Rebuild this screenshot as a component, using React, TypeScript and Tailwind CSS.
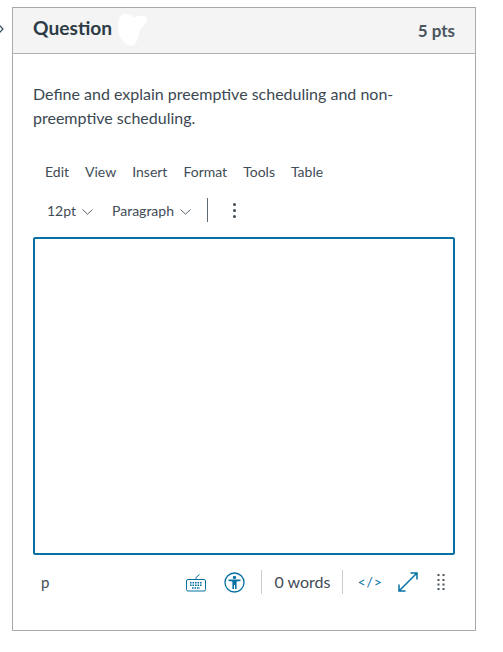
import React from 'react';

const menus = ['Edit', 'View', 'Insert', 'Format', 'Tools', 'Table'];

const Chevron = () => (
  <svg width="11" height="6" viewBox="0 0 11 6" fill="none" stroke="#5a6670" strokeWidth="1">
    <path d="M0.5 0.5 L5.5 5.2 L10.5 0.5" />
  </svg>
);

const App: React.FC = () => {
  return (
    <div className="relative w-[503px] h-[652px] overflow-hidden bg-white pt-[7px] pl-[12px] font-['Lato',sans-serif] text-[#2d3b45]">
      <svg className="absolute left-0 top-[24px]" width="4" height="10" viewBox="0 0 4 10" fill="none" stroke="#2d4a5c" strokeWidth="1.2">
        <path d="M-1 0.8 L3 5 L-1 9.2" />
      </svg>

      <div className="w-[464px] h-[624px] border border-[#a9a9a9] flex flex-col">
        <div className="relative h-[46px] shrink-0 bg-[#f4f4f4] border-b border-[#b0b0b0] flex items-center justify-between pl-[20px] pr-[20px]">
          <span className="text-[19.2px] font-bold leading-none -mt-[5px]">Question</span>
          <span className="text-[17px] font-bold text-[#4a555e] leading-none -mt-[1px]">5 pts</span>
          <svg className="absolute left-[105px] top-[6px]" width="30" height="33" viewBox="0 0 30 33" fill="#ffffff">
            <path d="M4 1 C8 -1 13 1 16 4 C20 1 29 0 29 6 C29 11 24 12 22 16 C21 20 20 26 17 30 C14 33 9 32 6 28 C3 25 0 20 0 13 C0 8 1 3 4 1 Z" />
          </svg>
        </div>

        <div className="flex-1 flex flex-col px-[20px]">
          <p className="mt-[28px] text-[16px] leading-[24px] text-[#3b4852]">
            Define and explain preemptive scheduling and non-
            <br />
            preemptive scheduling.
          </p>

          <div className="mt-[32px] ml-[12px] flex gap-[16px] text-[14px] leading-[20px] text-[#3f4c56]">
            {menus.map((m) => (
              <span key={m}>{m}</span>
            ))}
          </div>

          <div className="mt-[14px] ml-[14px] h-[28px] flex items-center text-[14px] text-[#3f4c56]">
            <span>12pt</span>
            <span className="ml-[6px] mt-[3px]"><Chevron /></span>
            <span className="ml-[19px]">Paragraph</span>
            <span className="ml-[6px] mt-[3px]"><Chevron /></span>
            <div className="ml-[16px] w-px h-[24px] bg-[#5f6a73]" />
            <div className="ml-[25px] flex flex-col gap-[3px]">
              <div className="w-[3px] h-[3px] rounded-full bg-[#3f4c56]" />
              <div className="w-[3px] h-[3px] rounded-full bg-[#3f4c56]" />
              <div className="w-[3px] h-[3px] rounded-full bg-[#3f4c56]" />
            </div>
          </div>

          <div className="mt-[13px] h-[318px] border-2 border-[#0770a3] rounded-[2px]" />

          <div className="mt-[14px] h-[26px] flex items-center text-[#3f4c56]">
            <span className="ml-[8px] text-[15px] leading-none">p</span>
            <div className="ml-auto flex items-center">
              <svg width="20" height="19" viewBox="0 0 20 19" fill="none" stroke="#0770a3" strokeWidth="1">
                <rect x="0.5" y="6.5" width="19" height="11.5" rx="1.5" />
                <path d="M10 6 V4.5 L13.5 1.5" />
                <path d="M4 9.8 H16 M4 12.2 H16 M6 15 H14" strokeWidth="1.4" strokeDasharray="1.6 0.9" />
              </svg>
              <svg className="ml-[18px]" width="21" height="21" viewBox="0 0 21 21" fill="none">
                <circle cx="10.5" cy="10.5" r="9.5" stroke="#0770a3" strokeWidth="1.3" />
                <circle cx="10.5" cy="5.4" r="1.7" fill="#0770a3" />
                <path d="M4.5 7.6 H16.5 V9 L12.6 9.6 V17 H11 V13 H10 V17 H8.4 V9.6 L4.5 9 Z" fill="#0770a3" />
              </svg>
              <div className="ml-[16px] w-px h-[24px] bg-[#c7cdd1]" />
              <span className="ml-[12px] text-[16px] leading-none text-[#3f4c56]">0 words</span>
              <div className="ml-[12px] w-px h-[24px] bg-[#c7cdd1]" />
              <span className="ml-[14px] text-[14px] leading-none tracking-[1px] text-[#0770a3]">&lt;/&gt;</span>
              <svg className="ml-[15px]" width="20" height="20" viewBox="0 0 20 20" fill="none" stroke="#0770a3" strokeWidth="1.5">
                <path d="M12.5 1 H19 V7.5 M19 1 L1 19 M1 12.5 V19 H7.5" />
              </svg>
              <svg className="ml-[19px] mr-[10px]" width="8" height="18" viewBox="0 0 8 18" fill="#4a555e">
                <rect x="0.5" y="1" width="2" height="2" />
                <rect x="5.5" y="1" width="2" height="2" />
                <rect x="0.5" y="6" width="2" height="2" />
                <rect x="5.5" y="6" width="2" height="2" />
                <rect x="0.5" y="10.5" width="2" height="2" />
                <rect x="5.5" y="10.5" width="2" height="2" />
                <rect x="0.5" y="15" width="2" height="2" />
                <rect x="5.5" y="15" width="2" height="2" />
              </svg>
            </div>
          </div>
        </div>
      </div>
    </div>
  );
};

export default App;
